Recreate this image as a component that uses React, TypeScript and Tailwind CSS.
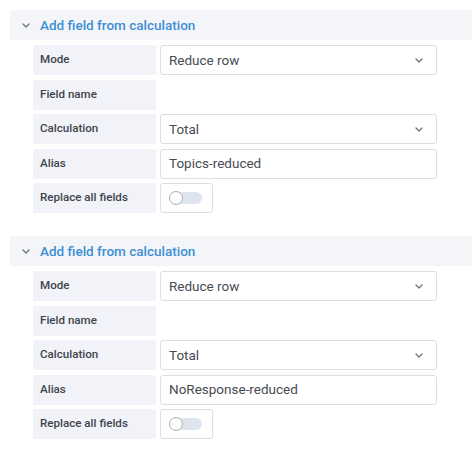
import React from "react";

function Chevron({ className }: { className?: string }) {
  return (
    <svg width="8" height="5" viewBox="0 0 8 5" className={className}>
      <path d="M1 1 L4 4 L7 1" stroke="#6b7280" strokeWidth="1.3" fill="none" strokeLinecap="round" strokeLinejoin="round" />
    </svg>
  );
}

function Label({ children }: { children: React.ReactNode }) {
  return (
    <div className="w-[123px] h-[30px] flex items-center pl-[7px] bg-[#f1f3f8] rounded-[2px] text-[11.6px] font-medium text-[#3f444c]">
      {children}
    </div>
  );
}

function Select({ value }: { value: string }) {
  return (
    <div className="w-[277px] h-[30px] flex items-center justify-between pl-[8px] pr-[13px] border border-[#dcdee3] rounded-[3px] bg-white text-[13.5px] text-[#474b52]">
      <span>{value}</span>
      <Chevron />
    </div>
  );
}

function Input({ value }: { value: string }) {
  return (
    <div className="w-[277px] h-[30px] flex items-center pl-[8px] border border-[#dcdee3] rounded-[3px] bg-white text-[13.5px] text-[#474b52]">
      {value}
    </div>
  );
}

function Toggle() {
  return (
    <div className="w-[53px] h-[30px] flex items-center pl-[9px] border border-[#dcdee3] rounded-[3px] bg-white">
      <div className="relative w-[32px] h-[12px] rounded-full bg-[#dfe5ee]">
        <div className="absolute left-[-1px] top-[-1px] w-[14px] h-[14px] rounded-full bg-white border border-[#a9aeb6]" />
      </div>
    </div>
  );
}

function Group({ alias }: { alias: string }) {
  return (
    <div>
      <div className="h-[30px] flex items-center bg-[#f4f5f8] pl-[12px] gap-[10px]">
        <Chevron />
        <span className="text-[13.5px] font-medium text-[#3d8fd5]">Add field from calculation</span>
      </div>
      <div className="flex flex-col gap-[4.5px] pl-[23px] pt-[5px]">
        <div className="flex gap-[4px]">
          <Label>Mode</Label>
          <Select value="Reduce row" />
        </div>
        <div className="flex gap-[4px]">
          <Label>Field name</Label>
        </div>
        <div className="flex gap-[4px]">
          <Label>Calculation</Label>
          <Select value="Total" />
        </div>
        <div className="flex gap-[4px]">
          <Label>Alias</Label>
          <Input value={alias} />
        </div>
        <div className="flex gap-[4px]">
          <Label>Replace all fields</Label>
          <Toggle />
        </div>
      </div>
    </div>
  );
}

export default function App() {
  return (
    <div className="w-[474px] h-[454px] bg-white pt-[10px] pl-[10px] pr-[2px] flex flex-col gap-[23px]" style={{ fontFamily: "Roboto, 'Noto Sans', sans-serif" }}>
      <Group alias="Topics-reduced" />
      <Group alias="NoResponse-reduced" />
    </div>
  );
}
